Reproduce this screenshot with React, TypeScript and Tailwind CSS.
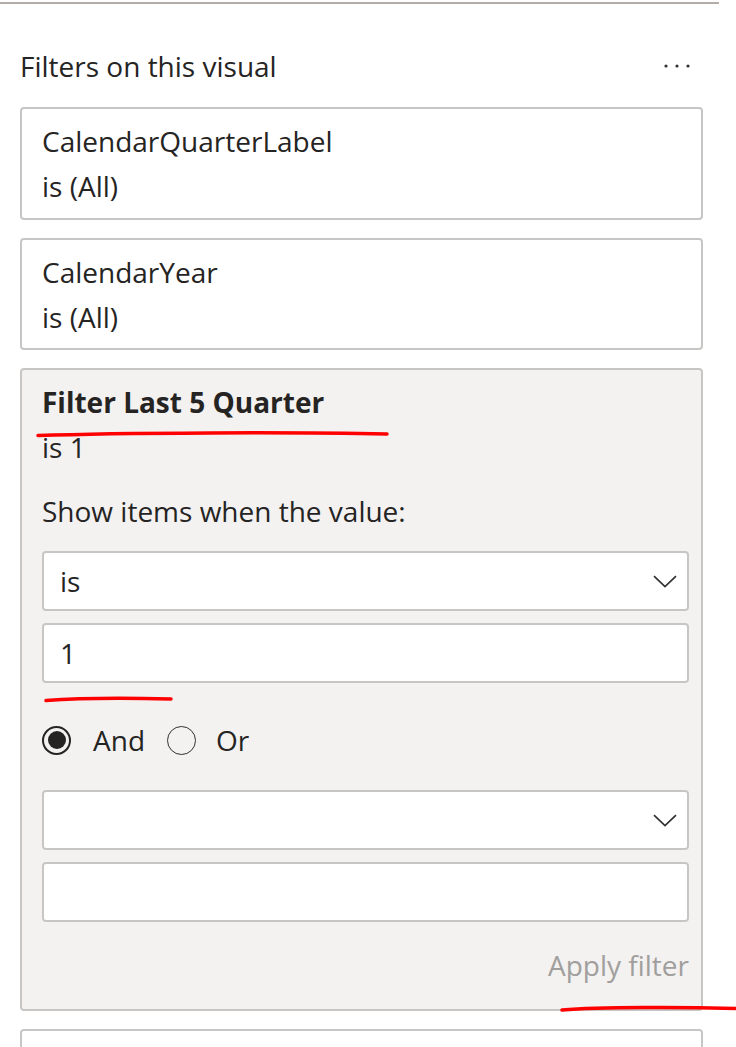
import React from "react";

const Chevron = () => (
  <svg width="24" height="13" viewBox="0 0 24 13" fill="none">
    <path d="M1 1.2 L12 11.6 L23 1.2" stroke="#323130" strokeWidth="1.7" />
  </svg>
);

const Field = ({ children, chevron }: { children?: React.ReactNode; chevron?: boolean }) => (
  <div className="flex h-[60px] items-center justify-between rounded-[4px] border-2 border-[#c8c6c4] bg-white pl-[16px] pr-[10px]">
    <span className="text-[28px] leading-[40px] text-[#252423]">{children}</span>
    {chevron && <Chevron />}
  </div>
);

export default function App() {
  return (
    <div
      className="relative h-[1047px] w-[736px] overflow-hidden bg-white text-[#252423]"
      style={{ fontFamily: '"Open Sans", "Noto Sans", sans-serif' }}
    >
      <div className="mt-[2px] h-[2px] w-[719px] bg-[#b3aca7]" />

      <div className="flex items-center justify-between pl-[20px] pr-[46px] pt-[44px] pb-[23px]">
        <span className="text-[28px] leading-[36px] text-[#252423]">Filters on this visual</span>
        <svg width="26" height="6" viewBox="0 0 26 6">
          <circle cx="2" cy="3" r="1.6" fill="#323130" />
          <circle cx="13" cy="3" r="1.6" fill="#323130" />
          <circle cx="24" cy="3" r="1.6" fill="#323130" />
        </svg>
      </div>

      <div className="flex w-[703px] flex-col gap-[18px] pl-[20px]">
        <div className="h-[113px] rounded-[4px] border-2 border-[#c8c6c4] bg-white pl-[20px] pt-[10px] text-[28px] leading-[45px]">
          <div>CalendarQuarterLabel</div>
          <div>is (All)</div>
        </div>

        <div className="h-[112px] rounded-[4px] border-2 border-[#c8c6c4] bg-white pl-[20px] pt-[10px] text-[28px] leading-[45px]">
          <div>CalendarYear</div>
          <div>is (All)</div>
        </div>

        <div className="flex h-[643px] flex-col rounded-[4px] border-2 border-[#c8c6c4] bg-[#f3f2f1] pl-[20px] pr-[12px] pt-[10px] text-[28px] leading-[45px]">
          <div className="font-bold">Filter Last 5 Quarter</div>
          <div>is 1</div>
          <div className="mt-[19px]">Show items when the value:</div>

          <div className="mt-[17px] flex flex-col gap-[12px]">
            <Field chevron>is</Field>
            <Field>1</Field>
          </div>

          <div className="mt-[42px] flex h-[30px] items-center">
            <div className="flex h-[29px] w-[29px] items-center justify-center rounded-full border-[2.5px] border-[#252423]">
              <div className="h-[18px] w-[18px] rounded-full bg-[#252423]" />
            </div>
            <span className="ml-[22px] text-[28px] leading-[30px]">And</span>
            <div className="ml-[22px] h-[29px] w-[29px] rounded-full border-[1.6px] border-[#323130]" />
            <span className="ml-[20px] text-[28px] leading-[30px]">Or</span>
          </div>

          <div className="mt-[35px] flex flex-col gap-[12px]">
            <Field chevron />
            <Field />
          </div>

          <div className="mt-[21px] text-right text-[28px] leading-[45px] text-[#a19f9d]">Apply filter</div>
        </div>

        <div className="h-[60px] rounded-[4px] border-2 border-[#c8c6c4] bg-white" />
      </div>

      <svg
        className="pointer-events-none absolute left-0 top-0"
        width="736"
        height="1047"
        viewBox="0 0 736 1047"
        fill="none"
      >
        <path d="M38 435.5 C 120 432.5, 300 432, 387 434" stroke="#ff0000" strokeWidth="3.5" strokeLinecap="round" />
        <path d="M46 700.5 C 80 698, 130 698, 171 699" stroke="#ff0000" strokeWidth="3.5" strokeLinecap="round" />
        <path d="M562 1010 C 600 1007, 680 1007, 738 1008.5" stroke="#ff0000" strokeWidth="3.5" strokeLinecap="round" />
      </svg>
    </div>
  );
}
